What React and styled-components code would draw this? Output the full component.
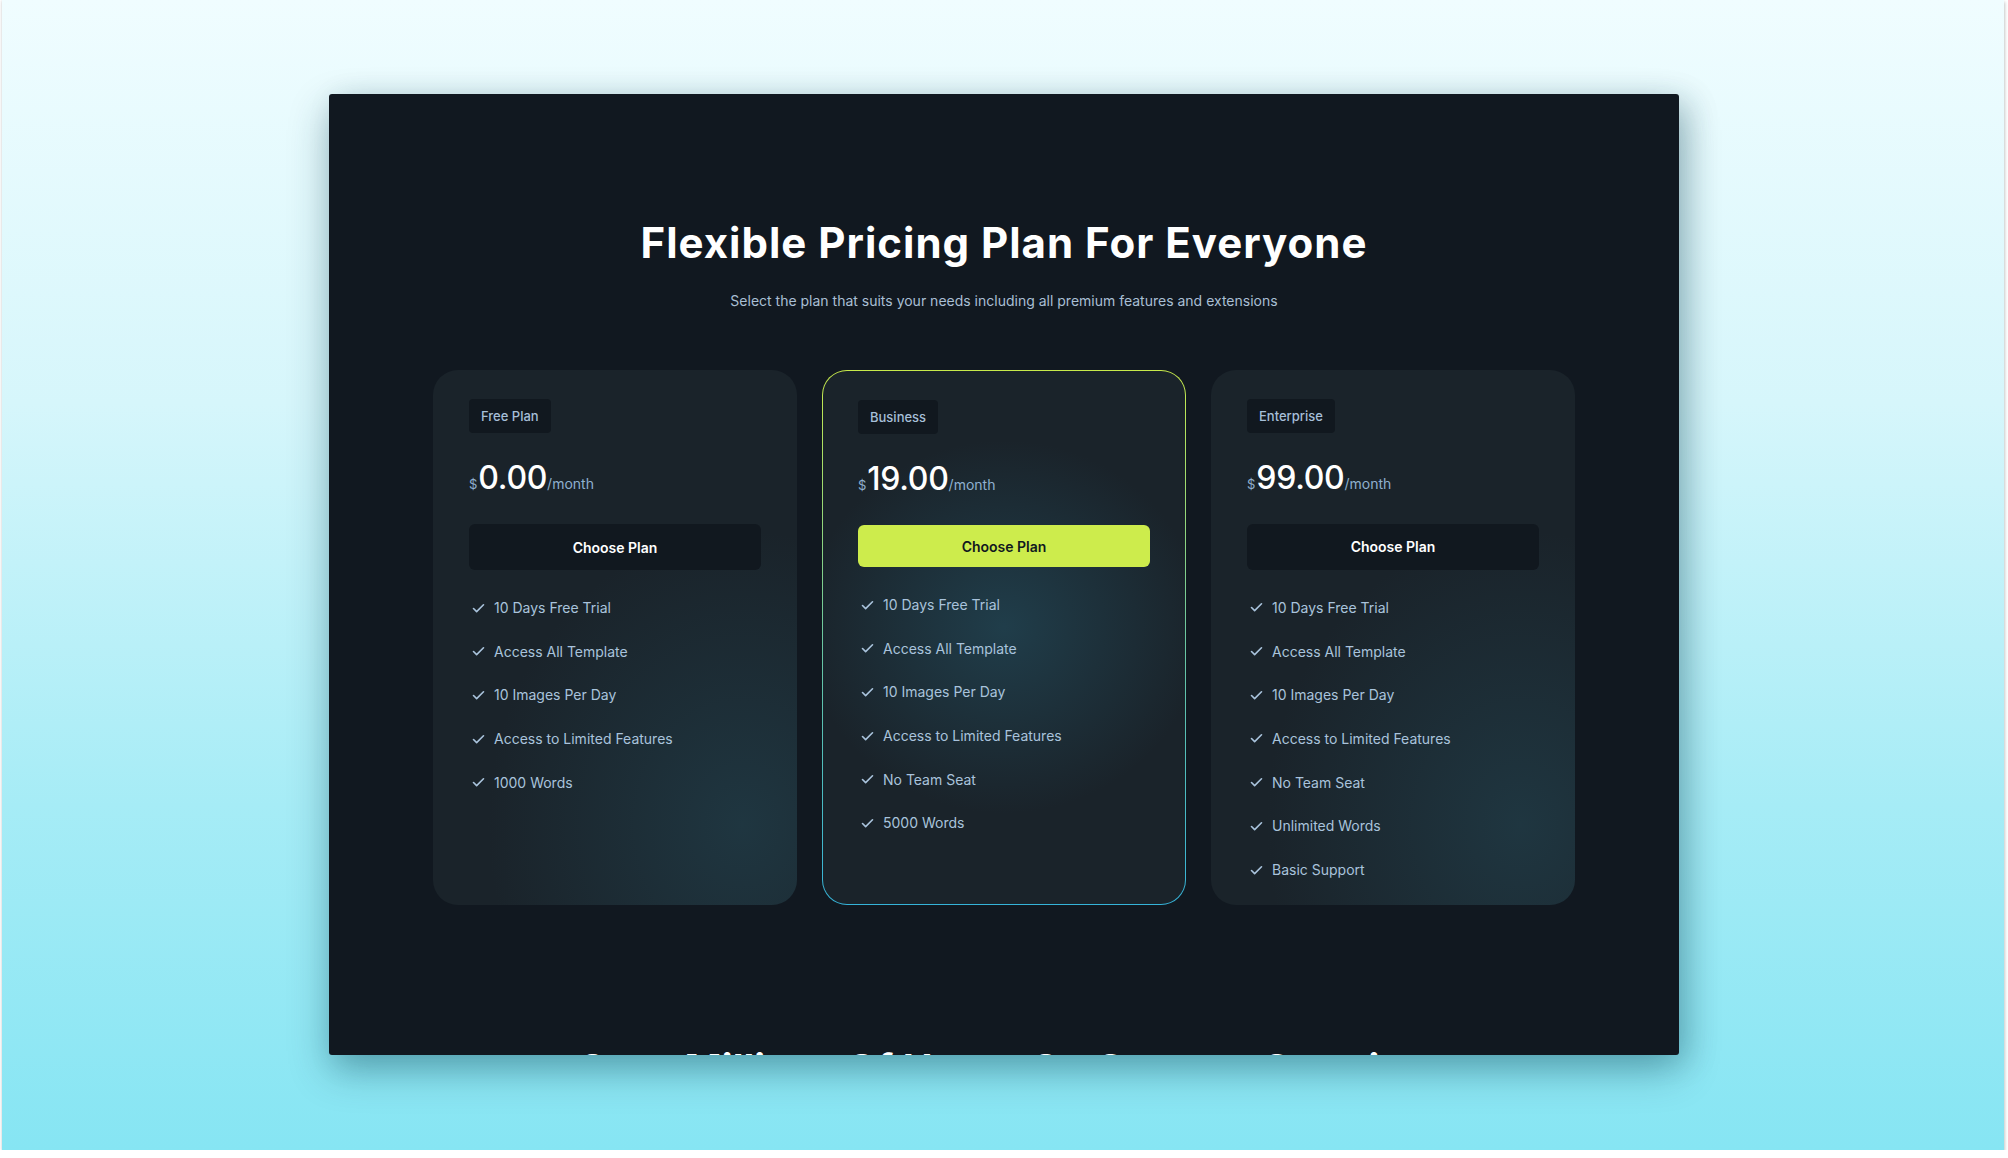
import React from 'react';
import styled, { createGlobalStyle, css } from 'styled-components';
import { Check } from 'lucide-react';

const GlobalStyle = createGlobalStyle`
  * { box-sizing: border-box; }
  html, body {
    margin: 0;
    padding: 0;
    background: #ffffff;
    font-family: Inter, "Noto Sans", sans-serif;
  }
`;

const plans = [
  {
    name: 'Free Plan',
    price: '0.00',
    features: [
      '10 Days Free Trial',
      'Access All Template',
      '10 Images Per Day',
      'Access to Limited Features',
      '1000 Words',
    ],
  },
  {
    name: 'Business',
    price: '19.00',
    featured: true,
    features: [
      '10 Days Free Trial',
      'Access All Template',
      '10 Images Per Day',
      'Access to Limited Features',
      'No Team Seat',
      '5000 Words',
    ],
  },
  {
    name: 'Enterprise',
    price: '99.00',
    features: [
      '10 Days Free Trial',
      'Access All Template',
      '10 Images Per Day',
      'Access to Limited Features',
      'No Team Seat',
      'Unlimited Words',
      'Basic Support',
    ],
  },
];

function App() {
  return (
    <>
      <GlobalStyle />
      <Frame>
        <Panel>
          <Header>
            <Title>Flexible Pricing Plan For Everyone</Title>
            <Subtitle>
              Select the plan that suits your needs including all premium features and extensions
            </Subtitle>
          </Header>

          <Cards>
            {plans.map((plan) => (
              <Card key={plan.name} $featured={plan.featured}>
                <Badge>{plan.name}</Badge>
                <Price>
                  <Currency>$</Currency>
                  <Amount>{plan.price}</Amount>
                  <Period>/month</Period>
                </Price>
                <ChooseButton $featured={plan.featured}>Choose Plan</ChooseButton>
                <Features>
                  {plan.features.map((f) => (
                    <Feature key={f}>
                      <Check size={15} strokeWidth={2.6} />
                      <span>{f}</span>
                    </Feature>
                  ))}
                </Features>
              </Card>
            ))}
          </Cards>

          {/* next section's heading, clipped by the panel edge */}
          <NextHeading>Save Millions Of Hours On Content Creation</NextHeading>
        </Panel>
      </Frame>
    </>
  );
}

const Frame = styled.div`
  width: 2002px;
  height: 1150px;
  margin-left: 2px;
  padding-top: 94px;
  background: linear-gradient(180deg, #f0fdff 0%, #d6f6fb 35%, #a6ecf6 70%, #86e5f3 100%);
  box-shadow: 1px 2px 3px rgba(0, 0, 0, 0.22), -1px 0 2px rgba(0, 0, 0, 0.08);
  display: flex;
  justify-content: center;
  align-items: flex-start;
`;

const Panel = styled.section`
  width: 1350px;
  height: 961px;
  margin-left: 2px;
  background: #111820;
  border-radius: 3px;
  overflow: hidden;
  padding: 125px 104px 0;
  box-shadow: 0 16px 40px rgba(0, 60, 75, 0.32), 10px 6px 30px rgba(0, 60, 75, 0.18);
`;

const Header = styled.header`
  display: flex;
  flex-direction: column;
  align-items: center;
`;

const Title = styled.h1`
  margin: 0;
  font-size: 42px;
  line-height: 48px;
  font-weight: 700;
  letter-spacing: 1px;
  color: #ffffff;
`;

const Subtitle = styled.p`
  margin: 24px 0 0;
  font-size: 14px;
  line-height: 20px;
  color: #a9bfd4;
`;

const Cards = styled.div`
  margin-top: 59px;
  display: grid;
  grid-template-columns: repeat(3, 364px);
  gap: 25px;
  align-items: stretch;
`;

const Card = styled.article`
  height: 535px;
  border-radius: 25px;
  padding: 29px 36px 25px;
  display: flex;
  flex-direction: column;
  align-items: flex-start;
  background:
    radial-gradient(ellipse 70% 55% at 85% 85%, rgba(33, 62, 74, 0.7) 0%, rgba(33, 62, 74, 0) 100%),
    #1a232a;

  ${(p) =>
    p.$featured &&
    css`
      padding: 29px 35px 25px;
      border: 1px solid transparent;
      background:
        radial-gradient(ellipse 55% 35% at 50% 48%, rgba(33, 66, 80, 0.85) 0%, rgba(33, 66, 80, 0) 100%) padding-box,
        linear-gradient(#1a232a, #1a232a) padding-box,
        linear-gradient(180deg, #c8ea4a 0%, #6cc7a0 50%, #35b3d9 100%) border-box;
    `}
`;

const Badge = styled.span`
  height: 34px;
  padding: 0 12px;
  display: inline-flex;
  align-items: center;
  background: #11181f;
  border-radius: 4px;
  font-size: 13px;
  font-weight: 500;
  color: #a6bfd8;
`;

const Price = styled.div`
  margin-top: 25px;
  display: flex;
  align-items: baseline;
  height: 40px;
  line-height: 40px;
`;

const Currency = styled.span`
  font-size: 13px;
  color: #8fb0cf;
  margin-right: 1px;
`;

const Amount = styled.span`
  font-size: 32px;
  font-weight: 500;
  color: #ffffff;
  letter-spacing: -0.3px;
`;

const Period = styled.span`
  font-size: 14px;
  color: #8fb0cf;
`;

const ChooseButton = styled.button`
  margin-top: 26px;
  width: 100%;
  height: ${(p) => (p.$featured ? '42px' : '46px')};
  border: none;
  border-radius: 6px;
  background: ${(p) => (p.$featured ? '#cdec4c' : '#11181f')};
  color: ${(p) => (p.$featured ? '#11181f' : '#ffffff')};
  font-family: Inter, sans-serif;
  font-size: 14px;
  font-weight: 600;
  cursor: pointer;
`;

const Features = styled.ul`
  list-style: none;
  margin: 28px 0 0;
  padding: 0 0 0 2px;
  display: flex;
  flex-direction: column;
  gap: 23.7px;
`;

const Feature = styled.li`
  display: flex;
  align-items: center;
  gap: 8px;
  font-size: 14px;
  line-height: 20px;
  color: #a9c3dc;

  svg {
    color: #a9c3dc;
    flex-shrink: 0;
  }
`;

const NextHeading = styled.h2`
  margin: 140px 0 0;
  text-align: center;
  font-size: 40px;
  line-height: 48px;
  font-weight: 700;
  color: #ffffff;
`;

export default App;
